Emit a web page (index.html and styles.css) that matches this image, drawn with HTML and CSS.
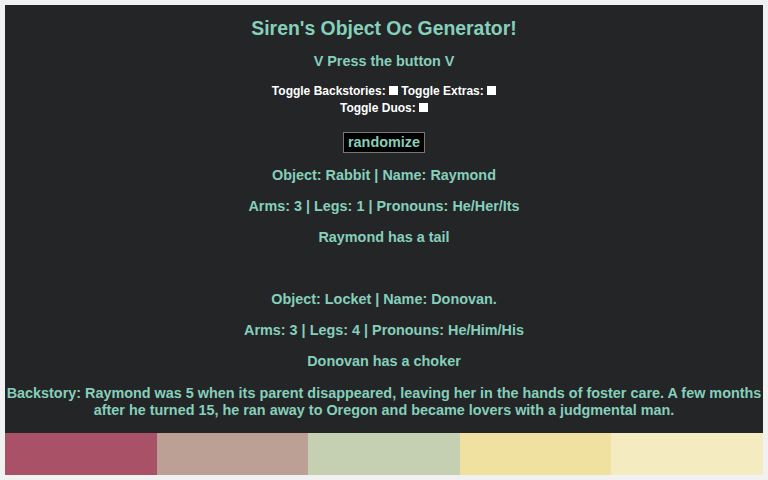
FILE: index.html
```html
<!DOCTYPE html>
<html>
<head>
<meta charset="utf-8">
<link rel="stylesheet" href="styles.css">
</head>
<body>
<div class="panel">
  <h1 class="title">Siren's Object Oc Generator!</h1>
  <p class="sub">V Press the button V</p>
  <div class="toggles">
    <div class="toggle-line">Toggle Backstories: <span class="box"></span> Toggle Extras: <span class="box"></span></div>
    <div class="toggle-line">Toggle Duos: <span class="box"></span></div>
  </div>
  <button class="btn">randomize</button>
  <p class="line first">Object: Rabbit | Name: Raymond</p>
  <p class="line">Arms: 3 | Legs: 1 | Pronouns: He/Her/Its</p>
  <p class="line">Raymond has a tail</p>
  <p class="line blank">&nbsp;</p>
  <p class="line">Object: Locket | Name: Donovan.</p>
  <p class="line">Arms: 3 | Legs: 4 | Pronouns: He/Him/His</p>
  <p class="line">Donovan has a choker</p>
  <p class="line story">Backstory: Raymond was 5 when its parent disappeared, leaving her in the hands of foster care. A few months after he turned 15, he ran away to Oregon and became lovers with a judgmental man.</p>
</div>
<div class="palette">
  <div class="swatch c1"></div>
  <div class="swatch c2"></div>
  <div class="swatch c3"></div>
  <div class="swatch c4"></div>
  <div class="swatch c5"></div>
</div>
</body>
</html>
```
FILE: styles.css
```css
html, body {
  margin: 0;
  padding: 0;
}
body {
  background: #f1f1f1;
  padding: 5px;
  font-family: "Liberation Sans", Arial, sans-serif;
  font-weight: bold;
}
.panel {
  background: #232527;
  color: #86cfbb;
  text-align: center;
  padding: 12px 0 14px;
}
.title {
  font-size: 19.4px;
  line-height: 23px;
  margin: 0;
}
.sub {
  font-size: 14.4px;
  line-height: 17px;
  margin: 13px 0 0;
}
.toggles {
  color: #ffffff;
  font-size: 12px;
  line-height: 17px;
  margin-top: 13px;
}
.box {
  display: inline-block;
  width: 9px;
  height: 9px;
  background: #ffffff;
  vertical-align: 0;
}
.btn {
  margin-top: 15px;
  background: #000000;
  color: #86cfbb;
  border: 1px solid #777777;
  font-family: "Liberation Sans", Arial, sans-serif;
  font-weight: bold;
  font-size: 14.4px;
  line-height: 17px;
  padding: 1px 4px;
}
.line {
  font-size: 14.4px;
  line-height: 17px;
  margin: 14px 0 0;
}
.first {
  margin-top: 14px;
}
.story {
  margin-top: 15px;
}
.palette {
  display: flex;
  height: 42px;
}
.swatch {
  flex: 1;
}
.c1 { background: #a85167; }
.c2 { background: #bca095; }
.c3 { background: #c5cfb1; }
.c4 { background: #f0e1a1; }
.c5 { background: #f5ebc1; }
```
